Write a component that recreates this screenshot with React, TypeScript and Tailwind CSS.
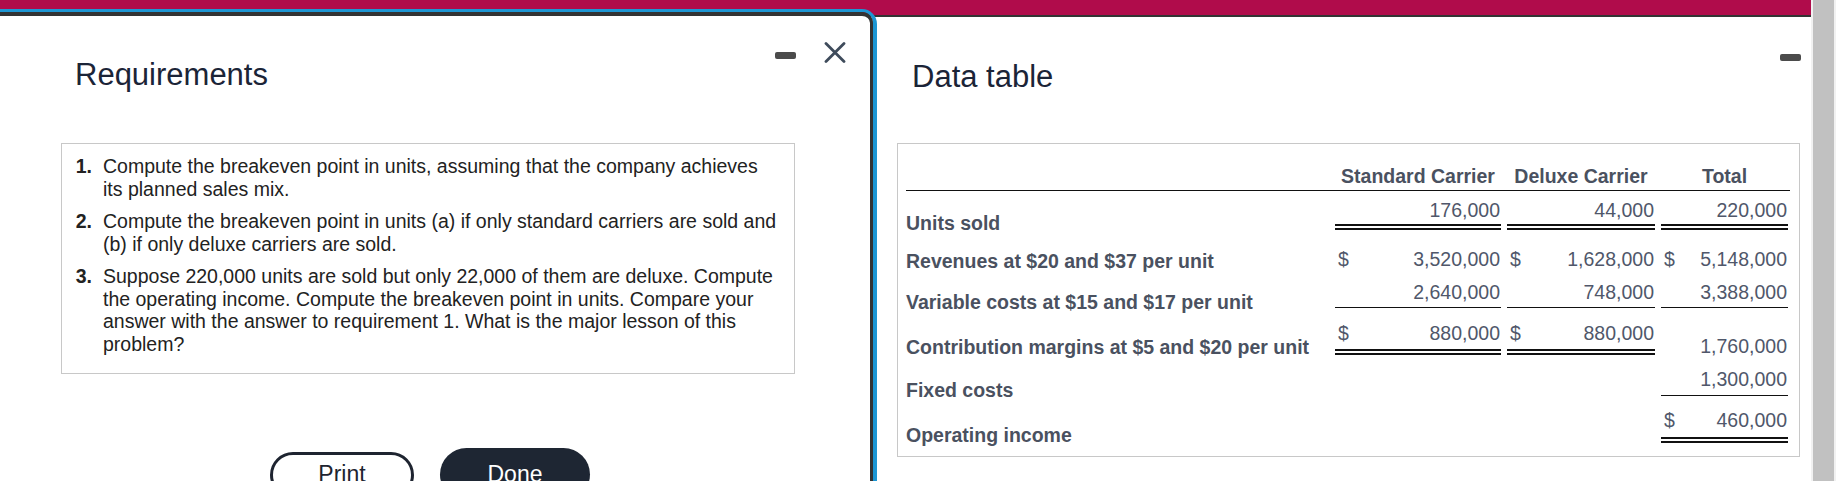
// padding / border classes per cell are written out in full so Tailwind picks them up
const rows: { label: string; labelCls: string; cells: { cls: string; dollar?: boolean; value?: string }[] }[] = [
  {
    label: 'Units sold',
    labelCls: 'pt-[21px]',
    cells: [
      { cls: 'pt-[8px] pb-[3px] border-b-[6px] border-double border-[#111]', value: '176,000' },
      { cls: 'pt-[8px] pb-[3px] border-b-[6px] border-double border-[#111]', value: '44,000' },
      { cls: 'pt-[8px] pb-[3px] border-b-[6px] border-double border-[#111]', value: '220,000' },
    ],
  },
  {
    label: 'Revenues at $20 and $37 per unit',
    labelCls: 'pt-[16px]',
    cells: [
      { cls: 'pt-[14px]', dollar: true, value: '3,520,000' },
      { cls: 'pt-[14px]', dollar: true, value: '1,628,000' },
      { cls: 'pt-[14px]', dollar: true, value: '5,148,000' },
    ],
  },
  {
    label: 'Variable costs at $15 and $17 per unit',
    labelCls: 'pt-[19px]',
    cells: [
      { cls: 'pt-[9px] pb-[4px] border-b border-[#111]', value: '2,640,000' },
      { cls: 'pt-[9px] pb-[4px] border-b border-[#111]', value: '748,000' },
      { cls: 'pt-[9px] pb-[4px] border-b border-[#111]', value: '3,388,000' },
    ],
  },
  {
    label: 'Contribution margins at $5 and $20 per unit',
    labelCls: 'pt-[23px]',
    cells: [
      { cls: 'pt-[9px] pb-[5px] border-b-[6px] border-double border-[#111]', dollar: true, value: '880,000' },
      { cls: 'pt-[9px] pb-[5px] border-b-[6px] border-double border-[#111]', dollar: true, value: '880,000' },
      { cls: 'pt-[22px]', value: '1,760,000' },
    ],
  },
  {
    label: 'Fixed costs',
    labelCls: 'pt-[21px]',
    cells: [
      { cls: '' },
      { cls: '' },
      { cls: 'pt-[10px] pb-[5px] border-b border-[#111]', value: '1,300,000' },
    ],
  },
  {
    label: 'Operating income',
    labelCls: 'pt-[23px]',
    cells: [
      { cls: '' },
      { cls: '' },
      { cls: 'pt-[8px] pb-[6px] border-b-[6px] border-double border-[#111]', dollar: true, value: '460,000' },
    ],
  },
];

const requirements = [
  'Compute the breakeven point in units, assuming that the company achieves its planned sales mix.',
  'Compute the breakeven point in units (a) if only standard carriers are sold and (b) if only deluxe carriers are sold.',
  'Suppose 220,000 units are sold but only 22,000 of them are deluxe. Compute the operating income. Compute the breakeven point in units. Compare your answer with the answer to requirement 1. What is the major lesson of this problem?',
];

function MinimizeBar() {
  return <div className="w-[21px] h-[7px] rounded-[2px] bg-[#4b4b4b]" />;
}

function RequirementsDialog() {
  return (
    <div className="relative z-10 -mt-[8px] w-[877px] shrink-0 border-t-[3px] border-r-[4px] border-[#1d96d3] rounded-tr-[15px]">
      <div className="h-full bg-white border-t-[4px] border-r-[3px] border-[#333] rounded-tr-[11px]">
        <div className="flex items-start">
          <h2 className="ml-[75px] mt-[41px] text-[31px] leading-[36px] text-[#1b2437]">Requirements</h2>
          <div className="ml-auto mr-[24px] mt-[26px] flex items-start gap-[28px]">
            <div className="mt-[10px]">
              <MinimizeBar />
            </div>
            <svg width="22" height="21" viewBox="0 0 22 21">
              <path d="M2 1.5 L20 19.5 M20 1.5 L2 19.5" stroke="#3e4b5b" strokeWidth="2.8" strokeLinecap="round" />
            </svg>
          </div>
        </div>

        <div className="ml-[61px] mt-[50px] w-[734px] border border-[#c8c8c8] pt-[11px] pb-[18px] pr-[16px]">
          <ol className="flex flex-col gap-[10px] text-[19.5px] leading-[22.5px] text-[#222]">
            {requirements.map((req, i) => (
              <li key={i} className="flex">
                <span className="w-[34px] shrink-0 pr-[4px] text-right font-bold">{i + 1}.</span>
                <span className="ml-[7px]">{req}</span>
              </li>
            ))}
          </ol>
        </div>

        <div className="mt-[74px] flex items-center justify-center gap-[26px] pr-[10px]">
          <button className="h-[46px] w-[144px] rounded-full border-[3px] border-[#1e2430] bg-white text-[23px] text-[#1e2430]">
            Print
          </button>
          <button className="h-[53px] w-[150px] rounded-full bg-[#1e2633] text-[23px] text-white">Done</button>
        </div>
      </div>
    </div>
  );
}

function DataTablePanel() {
  return (
    <div className="flex-1 bg-white">
      <div className="flex items-start">
        <h2 className="ml-[35px] mt-[42px] text-[31px] leading-[36px] text-[#1b2437]">Data table</h2>
        <div className="ml-auto mr-[10px] mt-[37px]">
          <MinimizeBar />
        </div>
      </div>

      <div className="ml-[20px] mt-[48px] w-[903px] border border-[#c8c8c8] pl-[8px] pt-[21px] pb-[10px]">
        <div className="w-[884px] text-[19.5px] leading-[22px]">
          {/* header */}
          <div className="grid grid-cols-[423px_166px_148px_127px] gap-x-[6px] border-b border-[#111] pb-[3px] font-bold text-[#4a5160]">
            <div />
            <div className="text-center">Standard Carrier</div>
            <div className="text-center">Deluxe Carrier</div>
            <div className="text-center">Total</div>
          </div>
          {rows.map((row) => (
            <div key={row.label} className="grid grid-cols-[423px_166px_148px_127px] items-start gap-x-[6px]">
              <div className={`${row.labelCls} font-bold text-[#4a5160] whitespace-nowrap`}>{row.label}</div>
              {row.cells.map((c, j) => (
                <div key={j} className={`${c.cls} flex justify-between text-[#50576a]`}>
                  <span className="pl-[3px]">{c.dollar ? '$' : ''}</span>
                  <span className="pr-[1px]">{c.value ?? ''}</span>
                </div>
              ))}
            </div>
          ))}
        </div>
      </div>
    </div>
  );
}

export default function App() {
  return (
    <div className="flex h-[481px] w-[1836px] overflow-hidden bg-white font-['Liberation_Sans',Arial,sans-serif]">
      <div className="flex w-[1811px] flex-col">
        <div className="h-[15px] shrink-0 bg-[#b00c4b]" />
        <div className="h-[2px] shrink-0 bg-[#333]" />
        <div className="flex min-h-0 flex-1">
          <RequirementsDialog />
          <DataTablePanel />
        </div>
      </div>
      <div className="w-[25px] shrink-0 bg-[#f1f1f1] px-[2px]">
        <div className="h-full w-[21px] bg-[#c1c1c1]" />
      </div>
    </div>
  );
}
